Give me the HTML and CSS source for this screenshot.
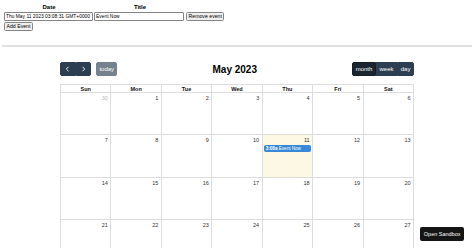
FILE: index.html
```html
<!DOCTYPE html>
<html lang="en">
<head>
  <meta charset="UTF-8">
  <meta name="viewport" content="width=device-width, initial-scale=1.0">
  <title>Calendar events</title>
  <link rel="stylesheet" href="styles.css">
</head>
<body>
  <!-- event form -->
  <table class="events">
    <thead>
      <tr><th>Date</th><th>Title</th><th></th></tr>
    </thead>
    <tbody>
      <tr>
        <td><input class="inp" type="text" value="Thu May 11 2023 03:08:31 GMT+0000"></td>
        <td><input class="inp inp2" type="text" value="Event Now"></td>
        <td><button class="btn">Remove event</button></td>
      </tr>
    </tbody>
  </table>
  <button class="btn add">Add Event</button>

  <hr class="line">

  <!-- calendar -->
  <div class="cal">
    <div class="toolbar">
      <div class="left">
        <div class="group">
          <button class="fc-btn arrow">
            <svg width="5" height="6" viewBox="0 0 5 6"><polyline points="3.5,0.8 1.3,3 3.5,5.2" fill="none" stroke="#fff" stroke-width="0.9"/></svg>
          </button>
          <button class="fc-btn arrow">
            <svg width="5" height="6" viewBox="0 0 5 6"><polyline points="1.5,0.8 3.7,3 1.5,5.2" fill="none" stroke="#fff" stroke-width="0.9"/></svg>
          </button>
        </div>
        <button class="fc-btn today">today</button>
      </div>
      <h2 class="title">May 2023</h2>
      <div class="group">
        <button class="fc-btn active">month</button>
        <button class="fc-btn">week</button>
        <button class="fc-btn">day</button>
      </div>
    </div>

    <table class="grid">
      <thead>
        <tr><th>Sun</th><th>Mon</th><th>Tue</th><th>Wed</th><th>Thu</th><th>Fri</th><th>Sat</th></tr>
      </thead>
      <tbody>
        <tr>
          <td><div class="num other">30</div></td>
          <td><div class="num">1</div></td>
          <td><div class="num">2</div></td>
          <td><div class="num">3</div></td>
          <td><div class="num">4</div></td>
          <td><div class="num">5</div></td>
          <td><div class="num">6</div></td>
        </tr>
        <tr>
          <td><div class="num">7</div></td>
          <td><div class="num">8</div></td>
          <td><div class="num">9</div></td>
          <td><div class="num">10</div></td>
          <td class="now">
            <div class="num">11</div>
            <div class="ev"><b>3:08a</b> Event Now</div>
          </td>
          <td><div class="num">12</div></td>
          <td><div class="num">13</div></td>
        </tr>
        <tr>
          <td><div class="num">14</div></td>
          <td><div class="num">15</div></td>
          <td><div class="num">16</div></td>
          <td><div class="num">17</div></td>
          <td><div class="num">18</div></td>
          <td><div class="num">19</div></td>
          <td><div class="num">20</div></td>
        </tr>
        <tr>
          <td><div class="num">21</div></td>
          <td><div class="num">22</div></td>
          <td><div class="num">23</div></td>
          <td><div class="num">24</div></td>
          <td><div class="num">25</div></td>
          <td><div class="num">26</div></td>
          <td><div class="num">27</div></td>
        </tr>
      </tbody>
    </table>
  </div>

  <a class="sandbox" href="#">Open Sandbox</a>
</body>
</html>
```

FILE: styles.css
```css
html, body{
  margin: 0;
  padding: 0;
}
body{
  padding: 3px 4px 0;
  font-family: "Liberation Sans", Arial, sans-serif;
  color: #000;
}

/* event form */
.events{
  border-spacing: 0;
}
.events th{
  font-size: 6px;
  line-height: 8px;
  padding: 0;
  text-align: center;
}
.events td{
  padding: 1px 1px 0 0;
}
.events td:nth-child(2){
  padding-right: 2px;
}
.inp{
  display: block;
  box-sizing: border-box;
  width: 89px;
  height: 9px;
  margin: 0;
  padding: 0 1px;
  border: 1px solid #858585;
  border-radius: 1px;
  font: 4.9px "Liberation Sans", Arial, sans-serif;
  color: #000;
}
.inp2{
  width: 90px;
}
.btn{
  display: block;
  height: 9px;
  margin: 0;
  padding: 0 1.5px;
  border: 1px solid #858585;
  border-radius: 1.5px;
  background: #efefef;
  font: 5.2px/7px "Liberation Sans", Arial, sans-serif;
  color: #000;
}
.add{
  margin-top: 1px;
}

.line{
  margin: 14px -2px 0;
  height: 0;
  border: none;
  border-top: 2px solid #e0e0e0;
}

/* calendar */
.cal{
  width: 354px;
  margin: 15px auto 0;
}
.toolbar{
  display: flex;
  justify-content: space-between;
  align-items: center;
  margin-bottom: 8px;
}
.left{
  display: flex;
  gap: 5px;
}
.group{
  display: flex;
}
.fc-btn{
  height: 14px;
  margin: 0;
  padding: 0 2.6px;
  border: 1px solid #2c3e50;
  background: #2c3e50;
  color: #fff;
  font: 6px/12px "Liberation Sans", Arial, sans-serif;
  border-radius: 0;
}
.group .fc-btn:first-child{
  border-radius: 2px 0 0 2px;
}
.group .fc-btn:last-child{
  border-radius: 0 2px 2px 0;
}
.fc-btn.arrow{
  width: 15.5px;
  padding: 0;
  display: flex;
  align-items: center;
  justify-content: center;
}
.fc-btn.today{
  border-radius: 2px;
  opacity: .65;
  padding: 0 2.4px;
}
.fc-btn.active{
  background: #1a252f;
  border-color: #151e27;
}
.title{
  margin: 0;
  font-size: 10px;
  font-weight: bold;
}

.grid{
  width: 100%;
  table-layout: fixed;
  border-collapse: collapse;
  border: 1px solid #ddd;
}
.grid th{
  border: 1px solid #ddd;
  font-size: 5.5px;
  line-height: 6px;
  padding: 0.5px 0;
  font-weight: bold;
  color: #111;
}
.grid td{
  height: 41.3px;
  border: 1px solid #ddd;
  padding: 0;
  vertical-align: top;
}
.grid td.now{
  background: #fcf8e3;
}
.num{
  padding: 2px 2.5px 1.5px;
  font-size: 5.5px;
  line-height: 6px;
  text-align: right;
  color: #333;
}
.num.other{
  color: #bbb;
}
.ev{
  margin: 0 1px;
  padding: 0 1px;
  background: #3788d8;
  border: 0.5px solid #3788d8;
  border-radius: 1.5px;
  color: #fff;
  font-size: 4.6px;
  line-height: 5px;
  white-space: nowrap;
  overflow: hidden;
}

/* floating sandbox link */
.sandbox{
  position: fixed;
  right: 10px;
  bottom: 7px;
  height: 14px;
  padding: 0 3.5px;
  background: #151515;
  border-radius: 2px;
  color: #fff;
  font-size: 5.5px;
  line-height: 14px;
  text-decoration: none;
}
```
